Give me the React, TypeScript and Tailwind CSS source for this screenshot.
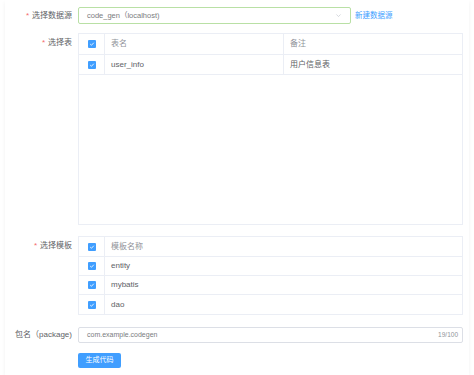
import React from 'react';

const font = { fontFamily: '"Helvetica Neue", "Liberation Sans", "Noto Sans CJK SC", sans-serif' };

const Check: React.FC = () => (
  <span className="flex h-[8px] w-[8px] items-center justify-center rounded-[1px] bg-[#409eff]">
    <svg viewBox="0 0 8 8" className="h-[6px] w-[6px]">
      <path d="M1.6 4.1 L3.3 5.7 L6.4 2.3" fill="none" stroke="#fff" strokeWidth="1.1" />
    </svg>
  </span>
);

const Label: React.FC<{ text: string; required?: boolean; top?: boolean }> = ({ text, required, top }) => (
  <div className={`flex w-[67px] shrink-0 justify-end text-[8px] text-[#606266] ${top ? 'pt-[4px]' : 'items-center'}`}>
    {required && <span className="mr-[3px] text-[#f56c6c]">*</span>}
    <span>{text}</span>
  </div>
);

const tables = [{ name: 'user_info', remark: '用户信息表' }];
const templates = ['entity', 'mybatis', 'dao'];

export default function App() {
  return (
    <div className="h-[375px] w-[474px] overflow-hidden bg-white" style={font}>
      <div className="mx-[5px] flex flex-col pb-[7px] pt-[7px] shadow-[0_2px_4px_rgba(0,0,0,0.06)]">
        {/* 数据源 */}
        <div className="flex h-[17px] gap-[6px]">
          <Label text="选择数据源" required />
          <div className="flex w-[273px] items-center justify-between rounded-[2px] border border-[#b9e0a5] px-[8px] text-[7.5px] text-[#7a7c80]">
            <span>code_gen（localhost)</span>
            <svg viewBox="0 0 10 10" className="h-[7px] w-[7px]">
              <path d="M2 3.5 L5 6.5 L8 3.5" fill="none" stroke="#c0c4cc" strokeWidth="0.9" />
            </svg>
          </div>
          <span className="-ml-[2px] flex items-center text-[7.5px] text-[#409eff]">新建数据源</span>
        </div>

        {/* 选择表 */}
        <div className="mt-[9px] flex gap-[6px]">
          <Label text="选择表" required top />
          <div className="flex h-[192px] w-[385px] flex-col border border-[#ebeef5] text-[8px]">
            <div className="flex h-[21px] border-b border-[#ebeef5] text-[#909399]">
              <div className="flex w-[26px] items-center justify-center border-r border-[#ebeef5]"><Check /></div>
              <div className="flex w-[179px] items-center border-r border-[#ebeef5] pl-[6px]">表名</div>
              <div className="flex flex-1 items-center pl-[6px]">备注</div>
            </div>
            {tables.map((t) => (
              <div key={t.name} className="flex h-[20px] border-b border-[#ebeef5] text-[#606266]">
                <div className="flex w-[26px] items-center justify-center border-r border-[#ebeef5]"><Check /></div>
                <div className="flex w-[179px] items-center border-r border-[#ebeef5] pl-[6px]">{t.name}</div>
                <div className="flex flex-1 items-center pl-[6px]">{t.remark}</div>
              </div>
            ))}
          </div>
        </div>

        {/* 选择模板 */}
        <div className="mt-[11px] flex gap-[6px]">
          <Label text="选择模板" required top />
          <div className="flex w-[385px] flex-col border border-[#ebeef5] text-[8px]">
            <div className="flex h-[20px] border-b border-[#ebeef5] text-[#909399]">
              <div className="flex w-[26px] items-center justify-center border-r border-[#ebeef5]"><Check /></div>
              <div className="flex flex-1 items-center pl-[6px]">模板名称</div>
            </div>
            {templates.map((t, i) => (
              <div key={t} className={`flex h-[19px] text-[#606266] ${i < templates.length - 1 ? 'border-b border-[#ebeef5]' : ''}`}>
                <div className="flex w-[26px] items-center justify-center border-r border-[#ebeef5]"><Check /></div>
                <div className="flex flex-1 items-center pl-[6px]">{t}</div>
              </div>
            ))}
          </div>
        </div>

        {/* 包名 */}
        <div className="mt-[12px] flex h-[16px] gap-[6px]">
          <Label text="包名（package)" />
          <div className="flex w-[385px] items-center justify-between rounded-[2px] border border-[#dcdfe6] pl-[8px] pr-[4px] text-[7px]">
            <span className="text-[#7a7c80]">com.example.codegen</span>
            <span className="text-[6.5px] text-[#909399]">19/100</span>
          </div>
        </div>

        {/* 按钮 */}
        <div className="mt-[10px] flex gap-[6px]">
          <div className="w-[67px] shrink-0" />
          <button className="flex h-[15px] w-[43px] items-center justify-center rounded-[2px] bg-[#409eff] text-[7px] text-white">
            生成代码
          </button>
        </div>
      </div>
    </div>
  );
}
